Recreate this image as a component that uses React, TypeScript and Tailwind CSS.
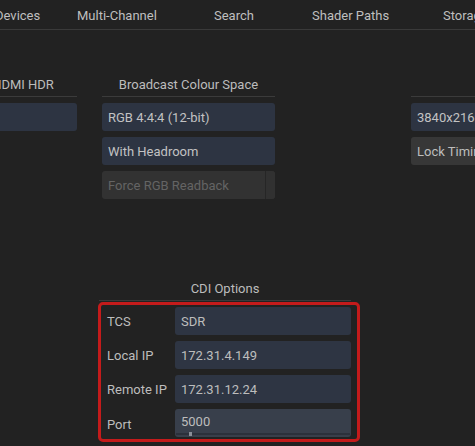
import React from 'react';

const tabs = [
  { label: 'Devices', w: 'w-[82px]' },
  { label: 'Multi-Channel', w: 'w-[137px]' },
  { label: 'Search', w: 'w-[98px]' },
  { label: 'Shader Paths', w: 'w-[131px]' },
  { label: 'Storage', w: 'w-[80px]' },
];

const Heading: React.FC<{ text: string; className?: string }> = ({ text, className }) => (
  <div className={`h-[22px] border-b border-[#3b3b3b] pt-[1px] text-center leading-[18px] text-[#bcbcbc] ${className ?? ''}`}>
    {text}
  </div>
);

const Field: React.FC<{ text: string; tone?: 'navy' | 'grey' | 'off' }> = ({ text, tone = 'navy' }) => {
  const bg = tone === 'navy' ? 'bg-[#2d3442] text-[#c2c2c2]' : tone === 'grey' ? 'bg-[#373737] text-[#bdbdbd]' : 'bg-[#323232] text-[#666666]';
  return (
    <div className={`h-[28px] rounded-[3px] px-[6px] pt-[1px] leading-[28px] whitespace-nowrap overflow-hidden ${bg}`}>{text}</div>
  );
};

const CdiRow: React.FC<{ label: string; value: string }> = ({ label, value }) => (
  <div className="flex h-[28px] items-center">
    <div className="w-[74px] pl-[6px] pt-[2px] text-[#bdbdbd]">{label}</div>
    <div className="h-[28px] flex-1 rounded-[3px] bg-[#2e3543] px-[6px] pt-[1px] leading-[28px] text-[#bdbdbd]">{value}</div>
  </div>
);

export default function App() {
  return (
    <div
      className="relative h-[446px] w-[475px] overflow-hidden bg-[#222222] text-[13px]"
      style={{ fontFamily: 'Roboto, "Noto Sans", sans-serif' }}
    >
      <div className="flex h-[30px] items-center border-b border-[#3a3a3a] -ml-[5px] whitespace-nowrap pt-[3px] text-[#bfbfbf]">
        {tabs.map((t) => (
          <div key={t.label} className={`${t.w} shrink-0`}>{t.label}</div>
        ))}
      </div>

      <div className="mt-[45px] flex whitespace-nowrap">
        <div className="-ml-[31px] w-[108px] shrink-0">
          <Heading text="HDMI HDR" />
          <div className="mt-[6px] flex flex-col gap-[6px]">
            <Field text="" />
          </div>
        </div>
        <div className="ml-[25px] w-[173px] shrink-0">
          <Heading text="Broadcast Colour Space" />
          <div className="mt-[6px] flex flex-col gap-[6px]">
            <Field text="RGB 4:4:4 (12-bit)" />
            <Field text="With Headroom" />
            <div className="flex h-[28px] overflow-hidden rounded-[3px] bg-[#323232]">
              <div className="flex-1 px-[6px] pt-[1px] leading-[28px] text-[#646464]">Force RGB Readback</div>
              <div className="w-[10px] border-l border-[#262626] bg-[#313131]" />
            </div>
          </div>
        </div>
        <div className="ml-[136px] w-[110px] shrink-0">
          <Heading text="" />
          <div className="mt-[6px] flex flex-col gap-[6px]">
            <Field text="3840x2160" />
            <Field text="Lock Timing" tone="grey" />
          </div>
        </div>
      </div>

      <div className="mt-[80px] ml-[99px] w-[252px]">
        <Heading text="CDI Options" />
      </div>
      <div className="mt-[1px] ml-[98px] w-[262px] rounded-[5px] border-[3px] border-[#c41b1b] pt-[2px] pb-[2px] pr-[6px]">
        <div className="flex flex-col gap-[6px]">
          <CdiRow label="TCS" value="SDR" />
          <CdiRow label="Local IP" value="172.31.4.149" />
          <CdiRow label="Remote IP" value="172.31.12.24" />
          <div className="flex h-[28px]">
            <div className="w-[74px] pl-[6px] pt-[2px] leading-[28px] text-[#bdbdbd]">Port</div>
            <div className="relative h-[28px] flex-1 rounded-[3px] bg-[#383f4b] text-[#bdbdbd]">
              <div className="px-[6px] pt-[1px] leading-[24px]">5000</div>
              <div className="absolute bottom-[2px] left-[1px] right-[1px] h-[2px] bg-[#2c313b]" />
              <div className="absolute bottom-[1px] left-[14px] h-[4px] w-[3px] bg-[#8a8f98]" />
            </div>
          </div>
        </div>
      </div>
    </div>
  );
}
